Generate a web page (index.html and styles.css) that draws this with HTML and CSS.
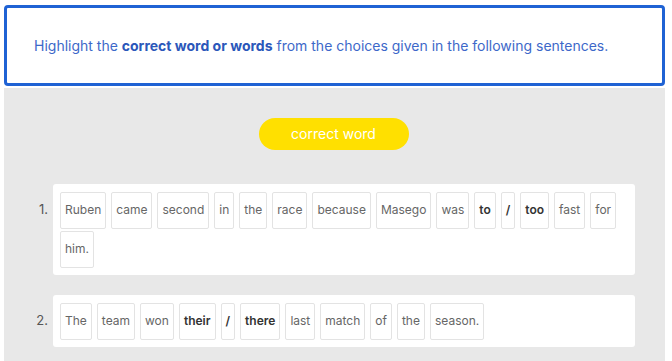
FILE: index.html
```html
<!DOCTYPE html>
<html>
<head>
<meta charset="utf-8">
<link rel="stylesheet" href="styles.css">
</head>
<body>
<div class="page">
  <div class="instructions">
    <p>Highlight the <b>correct word or words</b> from the choices given in the following sentences.</p>
  </div>
  <div class="activity">
    <div class="btn-row"><span class="pill">correct word</span></div>
    <div class="question">
      <div class="num">1.</div>
      <div class="card">
        <span class="w">Ruben</span><span class="w">came</span><span class="w">second</span><span class="w">in</span><span class="w">the</span><span class="w">race</span><span class="w">because</span><span class="w">Masego</span><span class="w">was</span><span class="w b">to</span><span class="w b">/</span><span class="w b">too</span><span class="w">fast</span><span class="w">for</span><span class="w">him.</span>
      </div>
    </div>
    <div class="question">
      <div class="num">2.</div>
      <div class="card">
        <span class="w">The</span><span class="w">team</span><span class="w">won</span><span class="w b">their</span><span class="w b">/</span><span class="w b">there</span><span class="w">last</span><span class="w">match</span><span class="w">of</span><span class="w">the</span><span class="w">season.</span>
      </div>
    </div>
  </div>
</div>
</body>
</html>
```
FILE: styles.css
```css
html, body {
  margin: 0;
  padding: 0;
  background: #ffffff;
  overflow: hidden;
}
body {
  font-family: "Inter", "Open Sans", sans-serif;
}
.page {
  width: 661px;
  padding: 5px 0 0 4px;
}
.instructions {
  height: 75px;
  border: 3px solid #1f62d4;
  border-radius: 4px;
  display: flex;
  align-items: center;
  padding: 0 27px;
}
.instructions p {
  margin: 0;
  font-size: 14px;
  color: #3d68c9;
}
.instructions b {
  font-weight: 700;
  color: #2b57ba;
}
.activity {
  margin-top: 2px;
  background: #e8e8e8;
  padding: 30px 0 0 0;
  height: 273px;
  box-sizing: border-box;
}
.btn-row {
  display: flex;
  justify-content: center;
  margin-bottom: 34px;
}
.pill {
  width: 150px;
  height: 32px;
  margin-left: -2px;
  background: #ffe000;
  border-radius: 16px;
  color: #ffffff;
  font-size: 14px;
  line-height: 30px;
  display: flex;
  align-items: center;
  justify-content: center;
}
.question {
  display: flex;
  align-items: flex-start;
  margin-bottom: 20px;
}
.num {
  width: 44px;
  flex: none;
  text-align: right;
  padding-right: 5px;
  font-size: 13px;
  color: #555555;
  line-height: 35px;
  margin-top: 8px;
}
.card {
  width: 568px;
  background: #ffffff;
  border-radius: 3px;
  padding: 8px 7px 7px 7px;
  display: flex;
  flex-wrap: wrap;
  column-gap: 5px;
  row-gap: 2px;
}
.w {
  height: 35px;
  line-height: 34px;
  padding: 0 4px;
  border: 1px solid #e3e3e3;
  border-radius: 2px;
  font-size: 12px;
  color: #666666;
}
.w.b {
  font-weight: 600;
  color: #333333;
}
```
